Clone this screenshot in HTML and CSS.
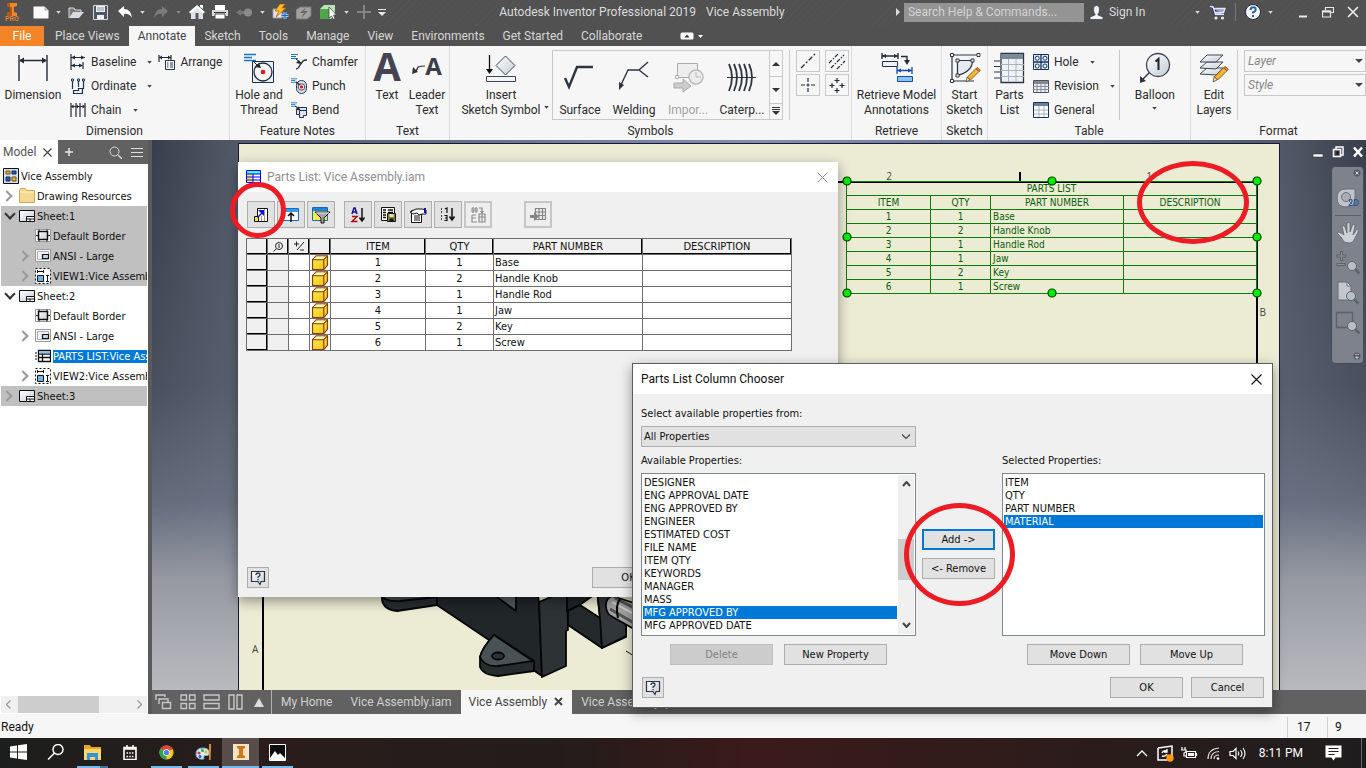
FILE: index.html
```html
<!DOCTYPE html>
<html lang="en">
<head>
    <meta charset="UTF-8">
    <meta name="viewport" content="width=device-width, initial-scale=1.0">
    <title>Autodesk Inventor Professional 2019 - Vice Assembly</title>
    <link rel="stylesheet" href="styles.css">
</head>
<body>
<svg class="defs" aria-hidden="true">
    <defs>
        <linearGradient id="steel" x1="0" y1="0" x2="1" y2="1"><stop offset="0" stop-color="#fff"/><stop offset="1" stop-color="#c3ccd6"/></linearGradient>
        <linearGradient id="gold" x1="0" y1="0" x2="1" y2="1"><stop offset="0" stop-color="#ffee58"/><stop offset="1" stop-color="#f0bf10"/></linearGradient>
    </defs>
    <symbol id="caret" viewBox="0 0 6 4"><path d="M0 0h6L3 3.5z" fill="currentColor"/></symbol>
    <symbol id="cube" viewBox="0 0 18 16"><path d="M1 5l4-4h12v10l-4 4.500H1z" fill="url(#gold)" stroke="#8d3b0c" stroke-width="1.300"/><path d="M2 4.500l3-3h11l-3 3z" fill="#fff6c0"/><path d="M1 5h12v10M13 5l4-4" fill="none" stroke="#8d3b0c" stroke-width="1.200"/></symbol>
    <symbol id="help" viewBox="0 0 16 16"><path d="M1.500 1.500h13v10H11l-1 3-2-3H1.500z" fill="url(#steel)" stroke="#2c3542" stroke-width="1.200"/><path d="M6 5q0-2 2-2t2 1.500Q10 6 8 7v1M8 9v1.200" fill="none" stroke="#2c3542" stroke-width="1.300"/></symbol>
    <symbol id="sheet" viewBox="0 0 16 16"><path d="M.5 2.500h15v11H.5z" fill="url(#steel)" stroke="#111"/><path d="M7.500 8.500h8v5h-8zM7.500 11h8M11 11v2.500" fill="#fff" stroke="#111"/></symbol>
    <symbol id="border" viewBox="0 0 16 16"><path d="M.5 1.500h15v12H.5z" fill="#fff" stroke="#999"/><path d="M3.500 3.500h9v8h-9z" fill="url(#steel)" stroke="#111" stroke-width="1.500"/><path d="M1 7.500h2M13 7.500h2M4 1.500v2M12 1.500v2M4 11.500v2M12 11.500v2" stroke="#111"/></symbol>
    <symbol id="ansi" viewBox="0 0 16 16"><path d="M.5 1.500h15v12H.5z" fill="#fff" stroke="#999"/><path d="M2.500 3.500h11v8h-11z" fill="#eef2f6" stroke="#aaa"/><path d="M7.500 6.500h6v4h-6z" fill="#c5daf0" stroke="#111" stroke-width="1.200"/></symbol>
    <symbol id="view" viewBox="0 0 16 16"><path d="M.5.5h15v15H.5z" fill="#fff" stroke="#111" stroke-dasharray="2 2"/><path d="M2.500 7.500h6v6h-6z" fill="#6db4e8" stroke="#111"/><path d="M2.500 3.500h6M2.500 2v3M8.500 2v3M12.500 7v7M11 7.500h3M11 13.500h3" stroke="#111"/></symbol>
    <symbol id="pencil" viewBox="0 0 16 16"><path d="M1 15l1-5 3 3z" fill="#f2d9a8" stroke="#51402b" stroke-width=".7"/><path d="M2.500 10L11 1.500l3 3L5.500 13z" fill="#f8b42c" stroke="#6d4a12" stroke-width=".8"/><path d="M11 1.500l1.500-1.200 3 3L14 4.500z" fill="#e27a4b" stroke="#6d4a12" stroke-width=".6"/></symbol>
    <symbol id="note" viewBox="0 0 8 6"><path d="M0 .5h7M0 2.500h5M0 4.500h7" stroke="#1474d4"/></symbol>
</svg>

<header class="titlebar">
    <div class="quick-access">
        <div class="app-logo"><svg width="12" height="13" viewBox="0 0 12 13"><path d="M1 0h10v3L8 4v5l3 1v3H1v-3l3-1V4L1 3z" fill="#f0862a"/><path d="M1 0h3v4L1 3zM4 4h2v9H1v-3l3-1z" fill="#b9590f"/></svg><span>PRO</span></div>
        <button class="q-new" aria-label="New"><svg width="16" height="13"><path d="M.5.500h11l4 4v8H.500z" fill="#fafafa"/><path d="M11.500.500v4h4z" fill="#b8b8b8"/></svg></button>
        <button class="q-caret" aria-label="New options"><svg width="5" height="3"><use href="#caret"/></svg></button>
        <button aria-label="Open"><svg width="17" height="13"><path d="M1 12V2h5l1 2h6v2" fill="#777" stroke="#ddd"/><path d="M1 12l4-6h11l-5 6z" fill="#d8dbe0"/></svg></button>
        <button aria-label="Save"><svg width="15" height="15"><path d="M.500.500h14v14H.500z" fill="#4c586a" stroke="#d5d9df"/><path d="M3 1h9v6H3zM4 10h7v4H4z" fill="#eef0f2"/><path d="M4 3h7M4 5h7" stroke="#8b95a3"/></svg></button>
        <button aria-label="Undo"><svg width="16" height="13"><path d="M1 5l6-5v3q7 0 8 9-3-5-8-4v3z" fill="#fff"/></svg></button>
        <button class="q-caret" aria-label="Undo history"><svg width="5" height="3"><use href="#caret"/></svg></button>
        <button aria-label="Redo"><svg width="14" height="13"><path d="M14 5L8 0v3Q1 3 0 12q3-5 8-4v3z" fill="#7c7c7c"/></svg></button>
        <button class="q-caret dim" aria-label="Redo history"><svg width="5" height="3"><use href="#caret"/></svg></button>
        <button aria-label="Home"><svg width="16" height="16"><path d="M2 8v7h12V8L8 2z" fill="#dfe3e8"/><path d="M0 8l8-7 8 7-1.500 1.500L8 4 1.500 9.500z" fill="#fff"/><path d="M11 1h3v4l-3-2z" fill="#fff"/><path d="M6.500 9h3v6h-3z" fill="#525b66"/></svg></button>
        <button aria-label="Print"><svg width="16" height="14"><path d="M3 0h10v5H3z" fill="#fff"/><path d="M0 5h16v6H0z" fill="#d8dbe0"/><path d="M2 7.500h12" stroke="#333"/><path d="M3 9h10v5H3z" fill="#fff" stroke="#555"/></svg></button>
        <button aria-label="Return"><svg width="16" height="9"><path d="M0 4.500L5 1v2h4v3H5v2z" fill="#777"/><circle cx="12" cy="4.500" r="4" fill="#8a8a8a"/></svg></button>
        <button class="q-caret" aria-label="Return options"><svg width="5" height="3"><use href="#caret"/></svg></button>
        <button aria-label="Update"><svg width="17" height="16"><path d="M1 5h9v9H1z" fill="#e5e5e5" stroke="#999"/><path d="M8 0l5 0-3 4h4L4 13l3-6H3z" fill="#ffc22c" stroke="#d1590e" stroke-width=".8"/><path d="M13 8v7M9.500 11.500h7" stroke="#8fc7ff" stroke-width="3"/><path d="M13 8v7M9.500 11.500h7" stroke="#1c66b8"/></svg></button>
        <button aria-label="Update all"><svg width="16" height="15"><path d="M0 5l4-3h11v9l-4 3H0z" fill="#a1a1a1" stroke="#777"/><path d="M10 2l-6 6h4l-3 5 7-7H8z" fill="#696969"/></svg></button>
        <button aria-label="Select"><svg width="16" height="16"><path d="M0 5l4-4h11v10l-4 4H0z" fill="#b8e5b2"/><path d="M0 5h10v10H0z" fill="#51a54f"/><path d="M9 3v11l2.500-2 2 3.500 1.500-1-1.500-3.500h3z" fill="#fff" stroke="#333" stroke-width=".7"/></svg></button>
        <button class="q-caret" aria-label="Select options"><svg width="5" height="3"><use href="#caret"/></svg></button>
        <button class="q-last" aria-label="Add"><svg width="14" height="14"><path d="M7 0v14M0 7h14" stroke="#858585" stroke-width="2"/></svg></button>
        <button class="q-caret" aria-label="Customize"><svg width="8" height="7"><path d="M0 .500h8" stroke="#e8e8e8"/><path d="M0 3h8L4 7z" fill="#e8e8e8"/></svg></button>
    </div>
    <h1 class="app-title"><span>Autodesk Inventor Professional 2019</span><span>Vice Assembly</span></h1>
    <div class="title-tools">
        <svg class="arrow" width="4" height="8"><path d="M0 0l4 4-4 4z" fill="#ddd"/></svg>
        <input class="search" type="text" placeholder="Search Help &amp; Commands..." aria-label="Search Help and Commands">
        <button class="sign-in"><svg width="15" height="15"><path d="M4.500 4a3 3.500 0 016 0q0 4-1.500 5v1l5 2v2.500H1V12l5-2V9Q4.500 8 4.500 4z" fill="#f0f2f5" stroke="#333b48" stroke-width=".7"/></svg>Sign In<svg class="sign-caret" width="5" height="3"><use href="#caret"/></svg></button>
        <button aria-label="Store"><svg width="16" height="15"><path d="M0 1.500h3l2.500 8H14" fill="none" stroke="#1e2960" stroke-width="3"/><path d="M0 1.500h3l2.500 8H14M4 3.500h11l-1.500 4H5" fill="#8fa0d0" stroke="#e6e9fa" stroke-width="1.300"/><circle cx="6" cy="13" r="1.600" fill="#e6e9fa"/><circle cx="12.500" cy="13" r="1.600" fill="#e6e9fa"/></svg></button>
        <span class="title-line"></span>
        <button aria-label="Help"><svg width="16" height="16"><circle cx="8" cy="8" r="7.500" fill="#f4f6fa" stroke="#243047"/><path d="M5.500 6q0-2.800 2.700-2.800T10.700 6Q10.700 7.300 8 8.500v1M8 11v2" fill="none" stroke="#1f5fb5" stroke-width="2"/></svg></button>
        <button class="q-caret" aria-label="Help options"><svg width="5" height="3"><use href="#caret"/></svg></button>
        <button class="win" aria-label="Minimize"><svg width="12" height="12"><path d="M2 10.500h8" stroke="#e8e8e8" stroke-width="2"/></svg></button>
        <button class="win" aria-label="Restore"><svg width="12" height="12"><path d="M3.500 4V1.500h8v5H9M.500 5h8v6h-8z" fill="none" stroke="#e8e8e8" stroke-width="1.200"/><path d="M.500 5.500h8" stroke="#e8e8e8" stroke-width="2"/></svg></button>
        <button class="win" aria-label="Close"><svg width="12" height="12"><path d="M1 1l10 10M11 1L1 11" stroke="#eee" stroke-width="1.600"/></svg></button>
    </div>
</header>

<nav class="tabs">
    <button class="file-tab">File</button>
    <button>Place Views</button>
    <button class="active">Annotate</button>
    <button>Sketch</button>
    <button>Tools</button>
    <button>Manage</button>
    <button>View</button>
    <button>Environments</button>
    <button>Get Started</button>
    <button>Collaborate</button>
    <button class="tab-toggle" aria-label="Minimize ribbon"><svg width="24" height="8"><rect x=".5" y=".5" width="13" height="7" rx="1.500" fill="#fff"/><path d="M4.500 5.500L7 2.500l2.500 3z" fill="#333"/><path d="M18 3h5l-2.500 3z" fill="#fff"/></svg></button>
</nav>

<section class="ribbon">
    <div class="panel dimension">
        <div class="panel-body">
            <button class="big"><svg width="32" height="32"><path d="M2 3v26M30 3v26M3 8.500h26" stroke="#222b38" stroke-width="1.400"/><path d="M2 8.500l5-3v6zM30 8.500l-5-3v6z" fill="#222b38"/></svg>Dimension</button>
            <div class="stack">
                <button><svg width="16" height="16"><path d="M1 0v16M1 3.500h14M1 11.500h11M13 8v7" stroke="#222b38" stroke-width="1.200"/><path d="M1 3.500l4-2v4zM15 3.500l-4-2v4zM1 11.500l4-2v4zM13 11.500l-4-2v4z" fill="#222b38"/></svg>Baseline<svg class="c" width="5" height="3"><use href="#caret"/></svg></button>
                <button><svg width="16" height="16"><path d="M2.500 3v8M8.500 3v6M13.500 3v8M3.500 15.500h9v-5h-4v2h-5z" fill="#e5ecf5" stroke="#1d3252" stroke-width="1.200"/><path d="M1.500 1h2v2h-2zM7.500 1h2v2h-2zM12.500 1h2v2h-2z" fill="#fff" stroke="#1d3252"/></svg>Ordinate<svg class="c" width="5" height="3"><use href="#caret"/></svg></button>
                <button><svg width="16" height="16"><path d="M1 1v14M6 1v14M10 1v14M15 1v14M1 4.500h14" stroke="#222b38" stroke-width="1.200"/><path d="M1 4.500l2.500-2v4zM6 4.500l2-2v4zM15 4.500l-2.500-2v4z" fill="#222b38"/></svg>Chain<svg class="c" width="5" height="3"><use href="#caret"/></svg></button>
            </div>
            <div class="stack">
                <button><svg width="17" height="16"><path d="M1 1v7M13 1v5M1 3.500h12" stroke="#222b38" stroke-width="1.200"/><path d="M1 3.500l3-2v4zM13 3.500l-3-2v4z" fill="#222b38"/><path d="M7.500 6.500h9v9h-9z" fill="#fff" stroke="#1d3252"/><path d="M9 9h1.500M12 9h3M9 11h1.500M12 11h3M9 13h1.500M12 13h3" stroke="#1d3252"/></svg>Arrange</button>
            </div>
        </div>
        <div class="panel-name">Dimension</div>
    </div>
    <div class="panel feature">
        <div class="panel-body">
            <button class="big"><svg width="32" height="32"><path d="M1 2.500h12M1 5.500h8M1 8.500h12" stroke="#1474d4" stroke-width="1.300"/><path d="M9.500 9.500h21v21h-21z" fill="#eaf0f7" stroke="#1d3252"/><circle cx="20" cy="20" r="9" fill="#f6f6f6" stroke="#222b38" stroke-width="1.300"/><path d="M10 9l6 6" stroke="#222"/><path d="M18 16l-6-1 4-4z" fill="#222"/><circle cx="20" cy="20" r="2.300" fill="#e11"/></svg>Hole and<br>Thread</button>
            <div class="stack">
                <button><svg width="16" height="16"><use href="#note" width="8" height="6"/><path d="M5 5l5 4" stroke="#222"/><path d="M10 10l-5-1 3-3z" fill="#222"/><path d="M5 15q2 0 4-4l3-4q1-1 4-1" fill="none" stroke="#222b38" stroke-width="1.300"/></svg>Chamfer</button>
                <button><svg width="16" height="16"><rect x="5.500" y="2.500" width="10" height="13" rx="5" fill="#dde4ec" stroke="#1d3252"/><circle cx="10.500" cy="9" r="3.300" fill="#fff" stroke="#445"/><use href="#note" width="7" height="6"/><path d="M5 4l4 3" stroke="#222" stroke-width="1.500"/><circle cx="10.500" cy="9" r="1.700" fill="#e11"/></svg>Punch</button>
                <button><svg width="16" height="16"><path d="M7.500 5.500h8v8h-3v2h-4v-3h-3v-5z" fill="#dde4ec" stroke="#1d3252"/><path d="M8.500 12.500v-4h7" fill="none" stroke="#1d3252"/><use href="#note" width="7" height="6"/><path d="M4 4l5 4" stroke="#222"/><path d="M9.500 8.500l-5-1 3-3z" fill="#222"/></svg>Bend</button>
            </div>
        </div>
        <div class="panel-name">Feature Notes</div>
    </div>
    <div class="panel text">
        <div class="panel-body">
            <button class="big"><span class="letter">A</span>Text</button>
            <button class="big"><span class="leader"><svg width="13" height="12"><path d="M2 10q3-1 4-5 3-1 7-1" fill="none" stroke="#333" stroke-width="1.200"/><path d="M0 12l1-7 5 5z" fill="#333"/></svg><span class="letter small">A</span></span>Leader<br>Text</button>
        </div>
        <div class="panel-name">Text</div>
    </div>
    <div class="panel symbols">
        <div class="panel-body">
            <button class="big insert"><svg width="32" height="32"><path d="M4.500 3v17" stroke="#111" stroke-width="1.300"/><path d="M1 17h7l-3.500 5z" fill="#111"/><path d="M20.500 4l9.500 9.500-9.500 9.500-9.500-9.500z" fill="url(#steel)" stroke="#3c4654"/><path d="M1.500 24.500h29v5h-29z" fill="#f1f4f8" stroke="#3c4654"/></svg><span>Insert<br>Sketch Symbol</span><svg class="c" width="5" height="3"><use href="#caret"/></svg></button>
            <div class="gallery">
                <button><svg width="32" height="32"><path d="M1 17l4 9L13 6h16" fill="none" stroke="#2d3542" stroke-width="2.400"/></svg>Surface</button>
                <button><svg width="32" height="32"><path d="M2 26L10 9h12M30 1l-9 8 9 7" fill="none" stroke="#2d3542" stroke-width="1.400"/><path d="M1 29v-8l5 3z" fill="#2d3542"/></svg>Welding</button>
                <button class="off"><svg width="32" height="32"><path d="M5.500 2.500h20v14h-20z" fill="#eee" stroke="#aaa"/><path d="M3.500 14.500h3v3h-3z" fill="#fff" stroke="#aaa"/><circle cx="24" cy="16" r="7" fill="#ececec" stroke="#bbb" stroke-width="1.500"/><path d="M24 11v5h5" fill="none" stroke="#bbb"/><path d="M2 22h9v-4l8 7-8 6v-4H2z" fill="#ccc" stroke="#aaa"/></svg>Impor...</button>
                <button><svg width="32" height="32"><path d="M1 16.500h29" stroke="#2d3542"/><path d="M3 3q6 13 0 27M8 3q6 13 0 27M13 3q6 13 0 27M18 3q6 13 0 27M23 3q6 13 0 27" fill="none" stroke="#2d3542" stroke-width="1.800"/></svg>Caterp...</button>
                <div class="gallery-scroll">
                    <button aria-label="Previous row"><svg width="8" height="4"><path d="M0 4l4-4 4 4z"/></svg></button>
                    <button aria-label="Next row"><svg width="8" height="4"><path d="M0 0h8L4 4z"/></svg></button>
                    <button class="all" aria-label="Show all"><svg width="8" height="8"><path d="M0 0h8v1H0zM0 2h8v1H0zM0 4h8L4 8z"/></svg></button>
                </div>
            </div>
            <div class="marks">
                <button aria-label="Centerline"><svg width="18" height="18"><path d="M2 16L16 2" stroke="#222b38" stroke-width="1.300" stroke-dasharray="5 2 2 2"/></svg></button>
                <button aria-label="Centerline bisector"><svg width="18" height="18"><path d="M1 11L11 1M3 16L16 3M9 17l8-8" stroke="#222b38" stroke-width="1.200" stroke-dasharray="4 1.500 1.500 1.500"/></svg></button>
                <button aria-label="Center mark"><svg width="18" height="18"><path d="M9 2v4M9 7.500v3M9 12v4M2 9h4M7.500 9h3M12 9h4" stroke="#222b38" stroke-width="1.200"/></svg></button>
                <button aria-label="Centered pattern"><svg width="18" height="18"><path d="M9 2v5M6.500 4.500h5M4 7v5M1.500 9.500h5M14 7v5M11.500 9.500h5M9 12v5M6.500 14.500h5" stroke="#222b38" stroke-width="1.200"/></svg></button>
            </div>
        </div>
        <div class="panel-name">Symbols</div>
    </div>
    <div class="panel retrieve">
        <div class="panel-body">
            <button class="big"><svg width="32" height="32"><path d="M1.500 9.500h15v5h-15z" fill="#eef2f8" stroke="#1d3252"/><path d="M1 1v6M17 1v6M1 4h16M20 4.500h6v6" fill="none" stroke="#222b38" stroke-width="1.400"/><path d="M1 4l4-2v4zM17 4l-4-2v4zM23 8h6l-3 5z" fill="#222b38"/><path d="M16 15v7M31 15v7M16 18.500h15" stroke="#164cae" stroke-width="1.300"/><path d="M16 18.500l4-2v4zM31 18.500l-4-2v4z" fill="#164cae"/><path d="M16.500 24.500h15v5h-15z" fill="#8fc1ee" stroke="#164cae"/></svg>Retrieve Model<br>Annotations</button>
        </div>
        <div class="panel-name">Retrieve</div>
    </div>
    <div class="panel sketch">
        <div class="panel-body">
            <button class="big"><svg width="32" height="32"><path d="M3 3h26M3 3v26h22" fill="none" stroke="#2c3542" stroke-width="1.200"/><path d="M8.500 8.500h15q0 11-15 15z" fill="#e5ebf2" stroke="#2c3542" stroke-width="1.200"/><path d="M1.500 1.500h3v3h-3zM28 1.500h3v3h-3zM1.500 27.500h3v3h-3zM7 7h3v3H7zM22 7h3v3h-3zM7 22h3v3H7z" fill="#fff" stroke="#2c3542"/><use href="#pencil" x="16" y="15" width="16" height="16"/></svg>Start<br>Sketch</button>
        </div>
        <div class="panel-name">Sketch</div>
    </div>
    <div class="panel tables">
        <div class="panel-body">
            <button class="big parts"><svg width="32" height="32"><path d="M8 1.500h22.500v29H8z" fill="#eef1f5" stroke="#2c3542" stroke-width="1.300"/><path d="M8.500 2h21.500v5H8.500z" fill="#7b8a99"/><path d="M8 12.500h23M8 18.500h23M8 24.500h23M15.500 7v23M23 7v23" stroke="#aab3bf"/><path d="M1 9h6M1 14.500h6M1 20h6M1 26h6" stroke="#2c3542"/></svg>Parts<br>List</button>
            <div class="stack">
                <button><svg width="16" height="16"><path d="M.5.5h15v15H.5z" fill="#dce8f7" stroke="#14345f"/><path d="M8 0v16M0 8h16" stroke="#14345f" stroke-width="1.300"/><circle cx="4.200" cy="4.200" r="2" fill="#fff" stroke="#14345f"/><circle cx="12" cy="4.200" r="2" fill="#fff" stroke="#14345f"/><circle cx="4.200" cy="12" r="2" fill="#fff" stroke="#14345f"/><circle cx="12" cy="12" r="2" fill="#fff" stroke="#14345f"/></svg>Hole<svg class="c" width="5" height="3"><use href="#caret"/></svg></button>
                <button><svg width="16" height="16"><path d="M.5 2.500h15v12H.5z" fill="#eef0f3" stroke="#4a5361"/><path d="M1 3h14v3H1z" fill="#8b8494"/><path d="M0 8.500h16M0 11.500h16M4 6v8M8 6v8M12 6v8" stroke="#828b98"/></svg>Revision<svg class="c" width="5" height="3"><use href="#caret"/></svg></button>
                <button><svg width="16" height="16"><path d="M.5.5h15v15H.5z" fill="#fff" stroke="#14345f"/><path d="M1 1h14v3H1z" fill="#68809a"/><path d="M1 8h14M1 12h14M6 4v11M11 4v11" stroke="#9eb2c9"/></svg>General</button>
            </div>
            <span class="divider"></span>
            <button class="big balloon"><svg width="32" height="32"><path d="M12 19l-9 9" stroke="#2c3542" stroke-width="1.500"/><path d="M1 31v-7l6 5z" fill="#2c3542"/><circle cx="19" cy="13" r="11.500" fill="url(#steel)" stroke="#3c4654" stroke-width="1.300"/><path d="M16.500 9.500L19.500 7v11" fill="none" stroke="#222" stroke-width="2"/></svg>Balloon<svg class="c" width="5" height="3"><use href="#caret"/></svg></button>
        </div>
        <div class="panel-name">Table</div>
    </div>
    <div class="panel format">
        <div class="panel-body">
            <button class="big layers"><svg width="32" height="32"><g fill="url(#steel)" stroke="#3c4654"><path d="M2 22l7-6h16l-7 7z"/><path d="M2 16l7-6h16l-7 7z"/><path d="M2 10l7-7h16l-7 7z"/></g><use href="#pencil" x="14" y="14" width="17" height="17"/></svg>Edit<br>Layers</button>
            <span class="divider"></span>
            <div class="format-selects">
                <div class="format-select"><select aria-label="Layer"><option>Layer</option></select><svg width="8" height="4"><path d="M0 0h8L4 4z" fill="#444"/></svg></div>
                <div class="format-select"><select aria-label="Style"><option>Style</option></select><svg width="8" height="4"><path d="M0 0h8L4 4z" fill="#444"/></svg></div>
            </div>
        </div>
        <div class="panel-name">Format</div>
    </div>
</section>

<main class="workspace">
    <aside class="browser">
        <div class="browser-head">
            <div class="browser-tab">Model <svg width="9" height="9"><path d="M.500.500l8 8M8.500.500l-8 8" stroke="#444" stroke-width="1.200"/></svg></div>
            <button aria-label="Add panel"><svg width="8" height="8"><path d="M4 0v8M0 4h8" stroke="#e8e8e8" stroke-width="1.500"/></svg></button>
            <button class="find" aria-label="Find"><svg width="13" height="13"><circle cx="5.500" cy="5.500" r="4.500" fill="none" stroke="#ddd"/><path d="M9 9l4 4" stroke="#ddd" stroke-width="1.300"/></svg></button>
            <button aria-label="Menu"><svg width="12" height="9"><path d="M0 .500h12M0 4.500h12M0 8.500h12" stroke="#ddd"/></svg></button>
        </div>
        <ul class="tree">
            <li class="root"><svg class="ic" viewBox="0 0 16 16"><path d="M.5.5h15v15H.5z" fill="#cfe0f2" stroke="#111"/><path d="M3 3h4v3H3zM9 9h4v4H9z" fill="#e8b13c" stroke="#7a4a00"/><path d="M9 3h4v3H9zM3 9h4v4H3z" fill="#2e5fa8" stroke="#0c2a5a"/></svg><span>Vice Assembly</span></li>
            <li class="l1"><i class="exp"></i><svg class="ic" viewBox="0 0 16 16"><path d="M.5 2.500l1-2h5l1 2h8v12H.5z" fill="#f5d892" stroke="#d0a654"/><path d="M1 4h14" stroke="#fff0c0"/></svg><span>Drawing Resources</span></li>
            <li class="l1 grey"><i class="exp open"></i><svg class="ic"><use href="#sheet"/></svg><span>Sheet:1</span></li>
            <li class="l2 grey"><i></i><svg class="ic"><use href="#border"/></svg><span>Default Border</span></li>
            <li class="l2 grey"><i class="exp"></i><svg class="ic"><use href="#ansi"/></svg><span>ANSI - Large</span></li>
            <li class="l2 grey"><i class="exp"></i><svg class="ic"><use href="#view"/></svg><span>VIEW1:Vice Assembly.iam</span></li>
            <li class="l1"><i class="exp open"></i><svg class="ic"><use href="#sheet"/></svg><span>Sheet:2</span></li>
            <li class="l2"><i></i><svg class="ic"><use href="#border"/></svg><span>Default Border</span></li>
            <li class="l2"><i class="exp"></i><svg class="ic"><use href="#ansi"/></svg><span>ANSI - Large</span></li>
            <li class="l2"><i></i><svg class="ic" viewBox="0 0 16 16"><path d="M3.500 2.500h12v11h-12zM3.500 6h12M3.500 9.500h12M7.500 2.500v11" fill="#fff" stroke="#111" stroke-width="1.300"/><path d="M4 3h11v2.500H4z" fill="#8ac0ea"/><path d="M0 5h2M0 8h2M0 11h2" stroke="#111"/></svg><span class="chosen">PARTS LIST:Vice Assembly.iam</span></li>
            <li class="l2"><i class="exp"></i><svg class="ic"><use href="#view"/></svg><span>VIEW2:Vice Assembly.iam</span></li>
            <li class="l1 grey"><i class="exp"></i><svg class="ic"><use href="#sheet"/></svg><span>Sheet:3</span></li>
        </ul>
        <div class="hscroll"><svg width="5" height="9"><path d="M4.500.500l-4 4 4 4" fill="none" stroke="#999" stroke-width="1.300"/></svg><span></span><svg width="5" height="9"><path d="M.500.500l4 4-4 4" fill="none" stroke="#999" stroke-width="1.300"/></svg></div>
    </aside>

    <div class="stage">
        <div class="canvas">
            <div class="sheet">
                <span class="frame-line"></span>
                <span class="frame-left"></span>
                <span class="zone zone-two">2</span><span class="zone zone-one">1</span><span class="zone zone-b">B</span><span class="zone zone-a">A</span>
                <span class="zone-tick"></span>
                <svg class="vice" width="254" height="90" viewBox="380 590 254 90">
                    <g stroke="#050607" stroke-width="1.800" stroke-linejoin="round">
                        <path d="M382 590v10q2 10 15 11l40-6v-15z" fill="#272c2f"/>
                        <path d="M382 596q4 6 18 5l36-4" fill="#454c50"/>
                        <path d="M437 590v15l55 37 50 34-3-74-2-12z" fill="#212628"/>
                        <path d="M497 590v7l19 14v-21z" fill="#515a5d"/>
                        <path d="M539 602l28-12 1 40-2 1v35l-24 11z" fill="#2d3235"/>
                        <path d="M567 590v21l14-7 20-14z" fill="#1f2426"/>
                        <path d="M568 611l12-6 20 13-3-28h18l11 37v10l-24 11-34-23z" fill="#24292c"/>
                        <path d="M597 590l3 28 2 30 24-12v-10l-11-36z" fill="#303639"/>
                        <path d="M494 635q-12 13-14 22v10q3 8 18 9l36-5v-10z" fill="#272c2f"/>
                        <path d="M494 635q-12 13-14 22 4 10 18 9l35-5z" fill="#495154"/>
                        <ellipse cx="498" cy="656" rx="6" ry="3.500" fill="#2d3235"/>
                        <path d="M612 596q-7 3-6 11 1 7 5 9l23 13v-26z" fill="#a3a3a3"/>
                    </g>
                    <path d="M612 602l22 12" stroke="#d0d0d0" stroke-width="2"/>
                    <path d="M610 609l24 14M615 598l19 10" stroke="#555" stroke-width="3"/>
                    <path d="M620 599q-5 7-2 19" fill="none" stroke="#050607" stroke-width="2"/>
                    <path d="M626 651l8 5" stroke="#111"/>
                </svg>
                <table class="drawn-list">
                    <caption>PARTS LIST</caption>
                    <colgroup><col class="d1"><col class="d2"><col class="d3"><col class="d4"></colgroup>
                    <tr><th>ITEM</th><th>QTY</th><th>PART NUMBER</th><th>DESCRIPTION</th></tr>
                    <tr><td>1</td><td>1</td><td>Base</td><td></td></tr>
                    <tr><td>2</td><td>2</td><td>Handle Knob</td><td></td></tr>
                    <tr><td>3</td><td>1</td><td>Handle Rod</td><td></td></tr>
                    <tr><td>4</td><td>1</td><td>Jaw</td><td></td></tr>
                    <tr><td>5</td><td>2</td><td>Key</td><td></td></tr>
                    <tr><td>6</td><td>1</td><td>Screw</td><td></td></tr>
                </table>
                <svg class="grips" width="422" height="124"><g fill="#00f000" stroke="#033d03" stroke-width="1.200"><circle cx="6" cy="6" r="4"/><circle cx="211" cy="6" r="4"/><circle cx="416" cy="6" r="4"/><circle cx="6" cy="62" r="4"/><circle cx="416" cy="62" r="4"/><circle cx="6" cy="118" r="4"/><circle cx="211" cy="118" r="4"/><circle cx="416" cy="118" r="4"/></g></svg>
            </div>
            <div class="mdi-controls">
                <button aria-label="Minimize drawing"><svg width="12" height="12"><path d="M1 8h10v3H1z" fill="#fff" stroke="#333" stroke-width=".6"/></svg></button>
                <button aria-label="Restore drawing"><svg width="12" height="12"><path d="M4 3V1h7v8H9M1.500 3.500h7v7h-7z" fill="none" stroke="#fff" stroke-width="1.500"/><path d="M4 5.500h3v3H4z" fill="#222"/></svg></button>
                <button aria-label="Close drawing"><svg width="12" height="12"><path d="M2 1.500l8 9M10 1.500l-8 9" stroke="#fff" stroke-width="2.500"/></svg></button>
            </div>
            <div class="navbar">
                <svg width="30" height="198" viewBox="0 0 30 198">
                    <circle cx="25" cy="6" r="3.500" fill="#565b64"/><path d="M23.500 4.500l3 3M26.500 4.500l-3 3" stroke="#ddd"/>
                    <path d="M5 31q0-9 9-9h9v9q0 9-9 9t-9-9z" fill="#bfc4ca" stroke="#6a717b"/><circle cx="14" cy="30" r="4.500" fill="#a9aeb6" stroke="#6a717b"/><path d="M17 34l3 3" stroke="#6a717b"/>
                    <path d="M3 48.500h26" stroke="#5c626d"/>
                    <path d="M12 75q-2-5-7-9 2-2 7 2l-2-9q2-1 3 1l2 6V56q2-1 3 0v9l3-8q2 0 2 2l-2 9 4-6q2 0 1 3l-4 8q-1 3-5 3z" fill="#ced2d6" stroke="#5f6570" stroke-width=".8"/>
                    <path d="M9.500 84v10M4.500 89h10M4.500 97.500h9" stroke="#5c626d" stroke-width="3"/><path d="M9.500 85v8M5.500 89h8M5.500 97.500h7" stroke="#8d939c"/>
                    <path d="M6 115h9l4 4v14H6z" fill="#c3c7cd" stroke="#666d77"/><path d="M15 115v4h4z" fill="#f0f0f0" stroke="#666d77"/>
                    <path d="M4.500 145.500h16v15h-16z" fill="none" stroke="#5c626d" stroke-width="1.300"/>
                    <g fill="#b8c0c6" stroke="#5e646e"><circle cx="20" cy="99" r="4.500"/><circle cx="19" cy="129" r="4.500"/><circle cx="20" cy="159" r="4.500"/></g>
                    <path d="M23.500 102.500l4 4M22.500 132.500l4 4M23.500 162.500l4 4" stroke="#5e646e" stroke-width="2.500"/>
                    <circle cx="25" cy="189" r="3.500" fill="#565b64"/><path d="M23 187.500h4M23.500 190h3L25 191.500z" fill="#ddd" stroke="#ddd" stroke-width=".6"/>
                </svg>
                <span class="two-d">2D</span>
            </div>
        </div>
        <div class="doc-tabs">
            <div class="doc-icons">
                <button aria-label="Cascade"><svg width="17" height="16"><path d="M1 6V1h9v2M4 10V5h9v3M7.500 8.500h8v6h-8z" fill="none" stroke="#c8c8c8" stroke-width="1.400"/></svg></button>
                <button aria-label="Arrange"><svg width="16" height="16"><path d="M1 1h5.500v5H1zM9.500 1H15v5H9.500zM1 9.500h5.500v5H1zM9.500 9.500H15v5H9.500z" fill="none" stroke="#c8c8c8" stroke-width="1.300"/></svg></button>
                <button aria-label="Tile horizontally"><svg width="17" height="16"><path d="M1 1h15v5H1zM1 9.500h15v5H1z" fill="none" stroke="#c8c8c8" stroke-width="1.400"/></svg></button>
                <button aria-label="Tile vertically"><svg width="15" height="16"><path d="M1 1h5v14H1zM9 1h5v14H9z" fill="none" stroke="#c8c8c8" stroke-width="1.400"/></svg></button>
                <button aria-label="More windows"><svg width="10" height="9"><path d="M0 9l5-9 5 9z" fill="#ddd"/></svg></button>
            </div>
            <button>My Home</button>
            <button>Vice Assembly.iam</button>
            <button class="active">Vice Assembly <svg width="9" height="9"><path d="M1 1l7 7M8 1L1 8" stroke="#444" stroke-width="2"/></svg></button>
            <button>Vice Assembly.ipn</button>
        </div>
    </div>

    <section class="dialog parts-dialog">
        <header><svg width="15" height="14"><path d="M.500.500h14v12H.500z" fill="#fff04a" stroke="#00f"/><path d="M7 4h7v8H7z" fill="#fff"/><path d="M1 1h13v3H1z" fill="#4ff"/><path d="M0 4h15M0 7h15M0 10h15M7 4v9" stroke="#00f" stroke-width="1"/></svg><h2>Parts List: Vice Assembly.iam</h2><button class="close" aria-label="Close"><svg width="11" height="11"><path d="M.500.500l10 10M10.500.500l-10 10" stroke="#888"/></svg></button></header>
        <div class="parts-body">
            <div class="dialog-tools">
                <button aria-label="Column Chooser"><svg width="16" height="16"><path d="M4.500 1.500h10v13h-10z" fill="#fff" stroke="#111"/><path d="M8.500 9v5M11.500 2v12" stroke="#999"/><path d="M1.500 9.500h4v5h-4z" fill="#ffe23c" stroke="#111"/><path d="M5 3h6v6L9 7l-4 4-1-1 4-4z" fill="#1111e8"/></svg></button>
                <button aria-label="Group Settings"><svg width="16" height="16"><path d="M.500 1.500h15v12H.500z" fill="#fff" stroke="#1769bd"/><path d="M1 2h14v3H1z" fill="#3a9be8"/><path d="M8 15V6M5 9l3-3 3 3" fill="none" stroke="#111" stroke-width="1.500"/></svg></button>
                <button aria-label="Filter Settings"><svg width="20" height="18"><path d="M1.500 1.500h15v13h-15z" fill="#ffe94a" stroke="#1769bd"/><path d="M2 2h14v3H2z" fill="#1684e6"/><path d="M4 6h15l-6 6v5h-3v-5z" fill="#a3a7ab" stroke="#111"/><path d="M5 7h13" stroke="#eee"/></svg></button>
                <button class="apart" aria-label="Sort"><svg width="16" height="16"><path d="M2 7l2-6h1l2 6M3 5h3" fill="none" stroke="#13139a" stroke-width="1.500"/><path d="M2 9.500h5l-5 5h5.500" fill="none" stroke="#a31515" stroke-width="1.500"/><path d="M12 1v12M9.500 10.500L12 14l2.500-3.500" fill="none" stroke="#111" stroke-width="1.500"/></svg></button>
                <button aria-label="Export"><svg width="17" height="17"><path d="M1.500 1.500h13v13h-13z" fill="#fff" stroke="#111"/><path d="M3 4h3M8 4h5M3 6.500h3M8 6.500h5M3 9h3M3 11.500h3" stroke="#111" stroke-width="1.300"/><path d="M7.500 7.500h8v8h-8z" fill="#8a8a1c" stroke="#111"/><path d="M9.500 8h4v3h-4z" fill="#ddd"/><path d="M9.500 12.500h4v3h-4z" fill="#111"/></svg></button>
                <button aria-label="Table Layout"><svg width="18" height="16"><path d="M2.500 3.500h10v12h-10z" fill="#fff" stroke="#111"/><path d="M5 9h6M5 11h6M5 13h6" stroke="#111"/><path d="M1 5l6-3h6l4 1v4h-4l-3 1-2-2-4 1z" fill="#fff" stroke="#111"/><path d="M15 1h2v5h-2z" fill="#13139a"/></svg></button>
                <button aria-label="Renumber Items"><svg width="16" height="16"><path d="M1 2h1M1 5h1M1 9h1M1 12h1" stroke="#111" stroke-width="1.500"/><path d="M5 2l2-1v5M4.500 8.500H7v2.500H5h2v2.500H4.500" fill="none" stroke="#111" stroke-width="1.200"/><path d="M12 1v11M9.500 9.500L12 13l2.500-3.500" fill="none" stroke="#111" stroke-width="1.500"/></svg></button>
                <button class="off" aria-label="Save Item Overrides"><svg width="17" height="17"><path d="M3 1v6M6 1v6M1 3h7M1 5h7M9 2h3v5M10.500 5l1.500 2 1.500-2M2 9v7h5M2 9h4M2 12h4M9 8h6v8H9zM9 11h6M12 8v8" fill="none" stroke="#8d8d8d" stroke-width="1.200"/></svg></button>
                <button class="off wide" aria-label="Member Selection"><svg width="16" height="16"><path d="M5.500 1.500h10v11h-10zM5 5h10M5 8.500h10M9 1v11M12.500 1v11" fill="none" stroke="#858585" stroke-width="1.200"/><path d="M0 8h4V5l5 4.500L4 14v-3H0z" fill="#858585"/></svg></button>
            </div>
            <table class="parts-table">
                <colgroup><col class="p-small"><col class="p-small"><col class="p-small"><col class="p-small"><col class="p-item"><col class="p-qty"><col class="p-wide"><col class="p-wide"></colgroup>
                <thead><tr><th></th><th><svg width="11" height="11"><circle cx="6" cy="5" r="3.500" fill="none" stroke="#222"/><path d="M3 8l-2.500 2.500M6 3v4" stroke="#222"/></svg></th><th><svg width="11" height="11"><path d="M0 3h5M2.500.500v5M10 1L3 9M6 9h4" stroke="#222"/></svg></th><th></th><th>ITEM</th><th>QTY</th><th>PART NUMBER</th><th>DESCRIPTION</th></tr></thead>
                <tbody>
                    <tr><td></td><td></td><td></td><td><svg><use href="#cube"/></svg></td><td>1</td><td>1</td><td>Base</td><td></td></tr>
                    <tr><td></td><td></td><td></td><td><svg><use href="#cube"/></svg></td><td>2</td><td>2</td><td>Handle Knob</td><td></td></tr>
                    <tr><td></td><td></td><td></td><td><svg><use href="#cube"/></svg></td><td>3</td><td>1</td><td>Handle Rod</td><td></td></tr>
                    <tr><td></td><td></td><td></td><td><svg><use href="#cube"/></svg></td><td>4</td><td>1</td><td>Jaw</td><td></td></tr>
                    <tr><td></td><td></td><td></td><td><svg><use href="#cube"/></svg></td><td>5</td><td>2</td><td>Key</td><td></td></tr>
                    <tr><td></td><td></td><td></td><td><svg><use href="#cube"/></svg></td><td>6</td><td>1</td><td>Screw</td><td></td></tr>
                </tbody>
            </table>
            <div class="parts-foot">
                <button class="help-btn" aria-label="Help"><svg width="16" height="16"><use href="#help"/></svg></button>
                <button class="btn short">OK</button>
            </div>
        </div>
    </section>

    <section class="dialog chooser">
        <header><h2>Parts List Column Chooser</h2><button class="close" aria-label="Close"><svg width="11" height="11"><path d="M.500.500l10 10M10.500.500l-10 10" stroke="#111" stroke-width="1.100"/></svg></button></header>
        <div class="chooser-body">
            <div class="col-left">
                <label for="source">Select available properties from:</label>
                <div class="combo">
                    <select id="source"><option>All Properties</option></select>
                    <svg width="10" height="6"><path d="M1 .500l4 4 4-4" fill="none" stroke="#444" stroke-width="1.200"/></svg>
                </div>
                <label for="available">Available Properties:</label>
                <div class="list">
                    <select id="available" size="12">
                        <option>DESIGNER</option>
                        <option>ENG APPROVAL DATE</option>
                        <option>ENG APPROVED BY</option>
                        <option>ENGINEER</option>
                        <option>ESTIMATED COST</option>
                        <option>FILE NAME</option>
                        <option>ITEM QTY</option>
                        <option>KEYWORDS</option>
                        <option>MANAGER</option>
                        <option>MASS</option>
                        <option selected>MFG APPROVED BY</option>
                        <option>MFG APPROVED DATE</option>
                    </select>
                    <div class="vscroll"><svg width="9" height="6"><path d="M1 5l3.500-4L8 5" fill="none" stroke="#444" stroke-width="2"/></svg><span></span><svg width="9" height="6"><path d="M1 1l3.500 4L8 1" fill="none" stroke="#444" stroke-width="2"/></svg></div>
                </div>
                <div class="pair">
                    <button class="btn" disabled>Delete</button>
                    <button class="btn">New Property</button>
                </div>
            </div>
            <div class="col-mid">
                <button class="btn short focus">Add -&gt;</button>
                <button class="btn short">&lt;- Remove</button>
            </div>
            <div class="col-right">
                <label for="selected">Selected Properties:</label>
                <div class="list">
                    <select id="selected" size="12">
                        <option>ITEM</option>
                        <option>QTY</option>
                        <option>PART NUMBER</option>
                        <option selected>MATERIAL</option>
                    </select>
                </div>
                <div class="pair">
                    <button class="btn">Move Down</button>
                    <button class="btn">Move Up</button>
                </div>
            </div>
        </div>
        <div class="chooser-foot">
            <button class="help-btn" aria-label="Help"><svg width="16" height="16"><use href="#help"/></svg></button>
            <button class="btn short">OK</button>
            <button class="btn short">Cancel</button>
        </div>
    </section>

    <!-- hand-drawn highlights -->
    <span class="ring ring-tool"></span>
    <span class="ring ring-column"></span>
    <span class="ring ring-add"></span>
</main>

<footer class="status"><span class="ready">Ready</span><span class="num">17</span><span class="num last">9</span></footer>

<div class="taskbar">
    <button aria-label="Start"><svg width="17" height="16"><path d="M0 2.500l7-1v6H0zM8 1.300L17 0v7.500H8zM0 8.500h7v6l-7-1zM8 8.500h9V16l-9-1.300z" fill="#fff"/></svg></button>
    <button aria-label="Search"><svg width="17" height="16"><circle cx="11" cy="5.500" r="5" fill="none" stroke="#fff" stroke-width="1.400"/><path d="M7.500 9L1 15.500" stroke="#fff" stroke-width="1.500"/></svg></button>
    <button class="open twin" aria-label="File Explorer"><svg width="17" height="15"><path d="M0 0h6l1 2h10v13H0z" fill="#e8a823"/><path d="M0 4h17v11H0z" fill="#ffd766"/><path d="M3 15V8h11v7h-3v-3H6v3z" fill="#3592dd"/></svg></button>
    <button aria-label="Calendar"><svg width="14" height="15"><path d="M1 2.500h12v12H1zM1 4h12" fill="none" stroke="#fff" stroke-width="1.600"/><path d="M4 0v4M10 0v4" stroke="#fff" stroke-width="1.500"/><path d="M3.500 8h7M3.500 11.500h7" stroke="#fff" stroke-width="1.500" stroke-dasharray="1.500 1.200"/></svg></button>
    <button class="open" aria-label="Chrome"><svg width="15" height="15" viewBox="-8 -8 16 16"><circle r="7.500" fill="#f6c915"/><path d="M0 0L-6.500-3.750A7.500 7.500 0 016.500-3.750z" fill="#dc4637"/><path d="M0 0L-6.500-3.750A7.500 7.500 0 000 7.500z" fill="#31a350"/><circle r="3.600" fill="#fff"/><circle r="2.800" fill="#427fed"/></svg></button>
    <button class="open" aria-label="Paint"><svg width="17" height="17"><path d="M1 10q0-6 7-6t6 6q0 2-3 1.500T9 15q-8 1-8-5z" fill="#d5edf8" stroke="#75aed0"/><circle cx="4" cy="9" r="1.600" fill="#e33"/><circle cx="7.500" cy="6.500" r="1.500" fill="#3a4"/><circle cx="11" cy="8" r="1.500" fill="#f2b200"/><circle cx="5" cy="12.500" r="1.500" fill="#25c"/><path d="M14 0l2 0v5l-.500 11h-1.500z" fill="#d98b35"/></svg></button>
    <button class="open current" aria-label="Inventor"><svg width="16" height="16"><path d="M0 0h16v16H0z" fill="#fbe3c8"/><path d="M4 2h8v2l-2 1v6l2 1v2H4v-2l2-1V5L4 4z" fill="#d2751d"/></svg></button>
    <button class="open" aria-label="Photos"><svg width="17" height="17"><path d="M.500.500h16v16H.500z" fill="#0c0c0c" stroke="#fff"/><path d="M1 14l5-7 3 4 2-2 5 5v2H1z" fill="#fff"/></svg></button>
    <div class="tray">
        <button aria-label="Show hidden icons"><svg width="12" height="8"><path d="M1 7l5-5 5 5" fill="none" stroke="#fff" stroke-width="1.300"/></svg></button>
        <button aria-label="Updates"><svg width="17" height="17"><path d="M1 3l14-2v10M1 3v12h9" fill="none" stroke="#fff" stroke-width="1.500"/><path d="M5 8q1-3 5-2M10 4v3H7M10 9q-1 3-5 2" fill="none" stroke="#fff" stroke-width="1.300"/><circle cx="13" cy="13" r="3.700" fill="#ff9b0e"/></svg></button>
        <button aria-label="Battery"><svg width="17" height="12"><path d="M5.500 4.500h9v6h-9zM15.500 6v3" fill="none" stroke="#fff" stroke-width="1.200"/><path d="M7 6h6v3H7z" fill="#fff"/><path d="M1 0v3M4 0v3M0 3h5v2L3 6v3h2" fill="none" stroke="#fff" stroke-width="1.200"/></svg></button>
        <button aria-label="Network"><svg width="13" height="13"><g fill="none" stroke="#ddd" stroke-width="1.200"><path d="M1 12Q1 2 12 1M4 12Q4 5 12 4.500M7 12q0-4 5-4"/></g><circle cx="11" cy="11.500" r="1.300" fill="#fff"/></svg></button>
        <button aria-label="Volume"><svg width="17" height="13"><path d="M1 4.500h3l3-3v10l-3-3H1z" fill="none" stroke="#fff" stroke-width="1.200"/><path d="M9 4.500q1.500 2 0 4M11.500 3q3 3.500 0 7M14 1q4 5.500 0 11" fill="none" stroke="#fff" stroke-width="1.100"/></svg></button>
        <time>8:11 PM</time>
        <button aria-label="Notifications"><svg width="17" height="16"><path d="M.500.500h16v12h-6l-2 3-2-3h-6z" fill="#fff"/><path d="M3.500 3.500h10M3.500 6.500h10M3.500 9.500h6" stroke="#222"/></svg></button>
    </div>
</div>
</body>
</html>
```

FILE: styles.css
```css
* {
    box-sizing: border-box;
}

body {
    margin: 0;
    height: 100vh;
    display: flex;
    flex-direction: column;
    overflow: hidden;
    font-family: Roboto, "Open Sans", sans-serif;
    font-size: 12px;
    line-height: 15px;
    color: #2b2b2b;
    background-color: #f6f6f6;
}

button, input, select {
    font: inherit;
    color: inherit;
}

button {
    border: none;
    background: none;
    padding: 0;
    white-space: nowrap;
}

svg {
    flex: none;
}

h1, h2 {
    margin: 0;
    font-size: inherit;
    font-weight: normal;
}

.defs {
    position: absolute;
    width: 0;
    height: 0;
}

/* title bar */

.titlebar {
    display: flex;
    align-items: center;
    justify-content: space-between;
    height: 26px;
    padding-bottom: 2px;
    background: repeating-linear-gradient(135deg, #515151 0, #515151 4px, #555 5px);
    color: #dcdcdc;
}

.titlebar button {
    width: 24px;
    height: 20px;
    display: flex;
    align-items: center;
    justify-content: center;
}

.quick-access, .title-tools {
    display: flex;
    align-items: center;
}

.quick-access {
    width: 388px;
}

.quick-access .q-new {
    margin-left: 5px;
}

.titlebar .q-caret {
    width: 12px;
}

.titlebar .dim {
    color: #888;
}

.app-logo {
    width: 24px;
    display: flex;
    flex-direction: column;
    align-items: center;
    font-size: 7px;
    line-height: 6px;
    font-weight: bold;
    color: #e08031;
}

.app-title {
    display: flex;
    gap: 10px;
}

.title-tools {
    width: 470px;
}

.arrow {
    margin-right: 4px;
}

.search {
    width: 180px;
    height: 19px;
    border: none;
    padding: 0 4px;
    background-color: #949494;
}

.search::placeholder {
    color: #d3d3d3;
}

.title-tools .sign-in {
    width: 122px;
    padding-left: 5px;
    gap: 5px;
    justify-content: flex-start;
}

.sign-caret {
    margin-left: auto;
    margin-right: 6px;
}

.title-line {
    width: 1px;
    height: 18px;
    margin: 0 5px;
    background-color: #777;
}

.title-tools .win {
    width: 25px;
}

.title-tools .q-caret + .win {
    margin-left: 14px;
}

/* ribbon tabs */

.tabs {
    display: flex;
    height: 20px;
    background-color: #515151;
    color: #d6d6d6;
}

.tabs button {
    padding: 0 9px;
}

.tabs .file-tab {
    width: 44px;
    margin-right: 2px;
    background-color: #f48428;
    color: #fff;
}

.tabs .active {
    background-color: #f6f6f6;
    color: #444;
}

.tabs .tab-toggle {
    margin-left: 20px;
}

/* ribbon */

.ribbon {
    display: flex;
    height: 94px;
    background-color: #f6f6f6;
}

.panel {
    display: flex;
    flex-direction: column;
    justify-content: space-between;
    flex: none;
    padding: 4px 0 1px;
    border-right: 1px solid #dcdcdc;
}

.panel-body {
    display: flex;
    align-items: flex-start;
}

.panel-name {
    text-align: center;
}

.dimension { width: 230px; }
.feature { width: 136px; }
.text { width: 84px; }
.symbols { width: 402px; }
.retrieve { width: 90px; }
.sketch { width: 46px; }
.tables { width: 203px; }
.format { flex: 1; border-right: none; }

.big {
    display: flex;
    flex-direction: column;
    align-items: center;
    gap: 4px;
    padding-top: 2px;
}

.retrieve .panel-body, .sketch .panel-body {
    justify-content: center;
}

.stack {
    display: flex;
    flex-direction: column;
    padding-left: 6px;
}

.stack button {
    display: flex;
    align-items: center;
    gap: 5px;
    height: 24px;
}

.c {
    margin-left: 6px;
    color: #444;
}

.dimension .big {
    width: 62px;
    margin-left: 2px;
}

.dimension .stack:last-child {
    padding-left: 6px;
}

.feature .big {
    width: 58px;
}

.feature .stack {
    padding-left: 3px;
}

.text .panel-body {
    padding-left: 1px;
}

.text .big {
    width: 40px;
}

.letter {
    height: 32px;
    font: bold 40px/28px "Open Sans", sans-serif;
    color: #454452;
}

.letter.small {
    font-size: 24px;
    line-height: 28px;
    color: #3a3f4a;
}

.leader {
    display: flex;
    align-items: center;
    height: 32px;
}

.insert {
    position: relative;
    width: 102px;
}

.insert .c {
    position: absolute;
    right: 3px;
    bottom: 9px;
}

.gallery {
    display: flex;
    height: 70px;
    border: 1px solid #c9c9c9;
}

.gallery > button {
    display: flex;
    flex-direction: column;
    align-items: center;
    justify-content: space-between;
    width: 54px;
    padding: 10px 0 1px;
}

.gallery > .off {
    color: #a3a3a3;
}

.gallery-scroll {
    display: flex;
    flex-direction: column;
    width: 13px;
    border-left: 1px solid #c9c9c9;
}

.gallery-scroll button {
    flex: 5;
    border-bottom: 1px solid #c9c9c9;
}

.gallery-scroll .all {
    flex: 3;
    border-bottom: none;
}

.gallery-scroll svg {
    display: block;
    margin: auto;
    fill: #333;
}

.marks {
    display: grid;
    grid-template-columns: 24px 24px;
    align-content: start;
    gap: 2px 5px;
    margin-left: 6px;
    padding-left: 6px;
    height: 70px;
    border-left: 1px solid #c9c9c9;
}

.marks button {
    width: 24px;
    height: 22px;
    border: 1px solid #c9c9c9;
}

.marks svg {
    display: block;
    margin: auto;
}

.parts {
    width: 44px;
}

.tables .stack {
    padding-left: 2px;
}

.tables .stack button {
    width: 86px;
}

.divider {
    width: 1px;
    height: 70px;
    background-color: #c9c9c9;
}

.balloon {
    width: 72px;
}

.balloon .c {
    margin: 0;
}

.layers {
    width: 46px;
}

.format-selects {
    flex: 1;
    display: flex;
    flex-direction: column;
    gap: 2px;
    margin-left: 6px;
}

.format-select {
    display: flex;
    align-items: center;
    height: 22px;
    padding-right: 2px;
    border: 1px solid #c9c9c9;
}

.format-select select {
    flex: 1;
    appearance: none;
    border: none;
    padding: 0 3px;
    background: none;
    color: #888;
    font-style: italic;
}

/* model browser */

.workspace {
    position: relative;
    flex: 1;
    min-height: 0;
    display: flex;
}

.browser {
    display: flex;
    flex-direction: column;
    width: 152px;
    border-right: 4px solid #5a5a5a;
    background-color: #fff;
}

.browser-head {
    display: flex;
    height: 24px;
    background-color: #616161;
}

.browser-head button {
    display: flex;
    align-items: center;
    justify-content: center;
    width: 22px;
}

.browser-head .find {
    margin-left: auto;
}

.browser-tab {
    display: flex;
    align-items: center;
    gap: 7px;
    width: 58px;
    padding-left: 3px;
    background-color: #fff;
    color: #555;
}

.tree, .dialog, .drawn-list {
    font-family: "DejaVu Sans Condensed", "Open Sans", sans-serif;
    font-size: 11px;
    line-height: 13px;
    color: #111;
}

.tree {
    list-style: none;
    margin: 0;
    padding: 2px 1px;
    flex: 1;
}

.tree li {
    display: flex;
    align-items: center;
    height: 20px;
    gap: 2px;
    overflow: hidden;
    white-space: nowrap;
}

.tree .root {
    padding-left: 2px;
}

.tree .l1 {
    padding-left: 2px;
}

.tree .l2 {
    padding-left: 18px;
}

.tree .grey {
    background-color: #c0c0c0;
}

.tree i {
    flex: none;
    width: 14px;
    height: 8px;
}

.exp::before {
    content: "";
    display: block;
    width: 6px;
    height: 6px;
    border: solid #9a9a9a;
    border-width: 2px 2px 0 0;
    transform: rotate(45deg);
}

.exp.open::before {
    margin: -2px 0 0 3px;
    border-color: #333;
    transform: rotate(135deg);
}

.ic {
    width: 16px;
    height: 16px;
}

.chosen {
    background-color: #0078d7;
    color: #fff;
}

.hscroll {
    display: flex;
    align-items: center;
    height: 17px;
    margin: 0 1px 1px;
    padding: 0 5px;
    background-color: #f0f0f0;
}

.hscroll span {
    width: 81px;
    height: 17px;
    margin: 0 auto 0 7px;
    background-color: #cdcdcd;
}

/* drawing area */

.stage {
    flex: 1;
    min-width: 0;
    display: flex;
    flex-direction: column;
}

.canvas {
    position: relative;
    flex: 1;
    overflow: hidden;
    background:
        linear-gradient(180deg, rgba(98, 106, 124, 0) 0, rgba(98, 106, 124, 0.4) 45%, rgba(112, 119, 136, 0.8) 66%, #9699a3 80%, #b9babe 100%),
        linear-gradient(90deg, #383e4a, #525a69 86px, #8290ab 50%, #525a69 calc(100% - 86px), #383e4a);
}

.sheet {
    position: absolute;
    top: 3px;
    bottom: 0;
    left: 86px;
    right: 86px;
    border: solid #14173f;
    border-width: 1px 1px 0;
    background-color: #ececd5;
}

.frame-line {
    position: absolute;
    top: 37px;
    right: 21px;
    bottom: 0;
    left: 500px;
    border: solid #000;
    border-width: 2px 2px 0 0;
}

.frame-left {
    position: absolute;
    top: 300px;
    bottom: 0;
    left: 23px;
    width: 2px;
    background-color: #000;
}

.zone {
    position: absolute;
    font: 10px/12px "Open Sans", sans-serif;
    color: #444;
}

.zone-two { top: 26px; right: 387px; }
.zone-one { top: 26px; right: 127px; }
.zone-b { top: 162px; right: 13px; }
.zone-a { top: 499px; left: 13px; }

.zone-tick {
    position: absolute;
    top: 28px;
    right: 258px;
    width: 2px;
    height: 9px;
    background-color: #000;
}

.vice {
    position: absolute;
    top: 446px;
    left: 141px;
}

.drawn-list {
    position: absolute;
    top: 37px;
    right: 22px;
    width: 411px;
    border-collapse: collapse;
    table-layout: fixed;
    font-size: 10px;
    line-height: 13px;
    color: #0b5d0b;
}

.drawn-list caption {
    height: 14px;
    border: solid #0a7d0a;
    border-width: 1px 1px 0;
}

.drawn-list th, .drawn-list td {
    height: 14px;
    padding: 0;
    border: 1px solid #0a7d0a;
    text-align: center;
    font-weight: normal;
}

.drawn-list td:nth-child(3) {
    padding-left: 2px;
    text-align: left;
}

.d1 { width: 84px; }
.d2 { width: 60px; }
.d3 { width: 133px; }

.grips {
    position: absolute;
    top: 31px;
    right: 16px;
}

.mdi-controls {
    position: absolute;
    top: 6px;
    right: 2px;
    display: flex;
    gap: 8px;
}

.mdi-controls button {
    height: 12px;
}

.mdi-controls svg {
    display: block;
}

.navbar {
    position: absolute;
    top: 26px;
    right: 2px;
    width: 33px;
    height: 198px;
    border: 1px solid #444a56;
    border-radius: 4px;
    background-color: #7d828d;
}

.navbar svg {
    display: block;
}

.two-d {
    position: absolute;
    top: 29px;
    right: 4px;
    font-size: 9px;
    font-weight: bold;
    color: #31598f;
}

.doc-tabs {
    display: flex;
    height: 24px;
    background-color: #616161;
    color: #d0d0d0;
}

.doc-tabs > button {
    padding: 0 9px;
}

.doc-tabs > .active {
    padding: 0 9px 0 8px;
    background-color: #f6f6f6;
    color: #444;
}

.doc-tabs .active svg {
    margin-left: 4px;
}

.doc-icons {
    display: flex;
    width: 120px;
    border-right: 1px solid #b0b0b0;
}

.doc-icons button {
    width: 24px;
}

.doc-icons svg {
    display: block;
    margin: auto;
}

/* dialogs */

.dialog {
    position: absolute;
    display: flex;
    flex-direction: column;
    background-color: #f0f0f0;
    box-shadow: 0 4px 12px rgba(0, 0, 0, 0.4);
}

.dialog header {
    display: flex;
    align-items: center;
    gap: 6px;
    height: 31px;
    padding: 0 10px 0 8px;
    background-color: #fff;
    font: 12px/16px Roboto, "Open Sans", sans-serif;
}

.close {
    margin-left: auto;
}

.close svg {
    display: block;
}

.parts-dialog {
    top: 22px;
    left: 238px;
    width: 600px;
    height: 435px;
}

.parts-dialog header {
    height: 30px;
    color: #8d8d8d;
}

.parts-body {
    flex: 1;
    display: flex;
    flex-direction: column;
    padding: 9px 8px;
}

.dialog-tools {
    display: flex;
    gap: 2px;
    padding-left: 1px;
    margin-bottom: 10px;
}

.dialog-tools button {
    display: flex;
    align-items: center;
    justify-content: center;
    width: 28px;
    height: 27px;
    border: 1px solid #adadad;
    background-color: #e1e1e1;
}

.dialog-tools .off {
    border: 2px solid #c6c6c6;
    background-color: #eee;
}

.dialog-tools .apart {
    margin-left: 7px;
}

.dialog-tools .wide {
    margin-left: 30px;
}

.parts-table {
    width: 546px;
    border-collapse: collapse;
    table-layout: fixed;
}

.parts-table th, .parts-table td {
    height: 16px;
    padding: 0;
    border: 1px solid #6d6d6d;
    background-color: #fff;
    font-weight: normal;
    text-align: center;
}

.parts-table th, .parts-table td:first-child {
    background-color: #f0f0f0;
    box-shadow: inset -1px -1px #000;
}

.parts-table td:nth-child(2) {
    background-color: #f0f0f0;
}

.parts-table td:nth-child(7) {
    padding-left: 1px;
    text-align: left;
}

.parts-table svg {
    display: block;
    width: 18px;
    height: 15px;
    margin: auto;
}

.parts-table th svg {
    width: 11px;
    height: 11px;
}

.p-small { width: 21px; }
.p-item { width: 95px; }
.p-qty { width: 68px; }
.p-wide { width: 149px; }

.parts-foot {
    display: flex;
    justify-content: space-between;
    margin-top: auto;
    padding: 0 165px 0 1px;
}

.help-btn {
    width: 22px;
    height: 21px;
    padding: 1px 2px;
    border: 1px solid #adadad;
    background-color: #e1e1e1;
}

.help-btn svg {
    display: block;
}

.btn {
    width: 103px;
    height: 21px;
    border: 1px solid #adadad;
    background-color: #e1e1e1;
}

.btn.short {
    width: 73px;
}

.btn.focus {
    border: 2px solid #0078d7;
}

.btn:disabled {
    border-color: #bfbfbf;
    background-color: #ccc;
    color: #838383;
}

.chooser {
    top: 223px;
    left: 632px;
    width: 641px;
    height: 345px;
    border: 1px solid #5c5c5c;
}

.chooser header {
    height: 30px;
}

.chooser-body {
    display: flex;
    align-items: flex-end;
    padding: 13px 7px 0 8px;
}

.chooser label {
    display: block;
}

.col-left {
    width: 275px;
}

.col-mid {
    display: flex;
    flex-direction: column;
    gap: 8px;
    margin: 0 7px 86px 6px;
}

.col-right {
    flex: 1;
}

.combo {
    display: flex;
    align-items: center;
    height: 21px;
    margin: 6px 0 7px;
    padding-right: 4px;
    border: 1px solid #adadad;
    background-color: #e1e1e1;
}

.combo select {
    flex: 1;
    appearance: none;
    border: none;
    padding: 0 2px;
    background: none;
}

.list {
    display: flex;
    height: 163px;
    margin: 6px 0 8px;
    padding: 1px;
    border: 1px solid #82878f;
    background-color: #fff;
}

.list select {
    flex: 1;
    min-width: 0;
    height: 159px;
    padding: 1px 0;
    border: none;
    outline: none;
    overflow: hidden;
    scrollbar-width: none;
    background-color: #fff;
}

.list option {
    height: 13px;
    min-height: 13px;
    padding: 0 1px;
    line-height: 13px;
}

.list option:checked {
    background: #0078d7 linear-gradient(#0078d7, #0078d7);
    color: #fff;
    -webkit-text-fill-color: #fff;
}

.vscroll {
    display: flex;
    flex-direction: column;
    align-items: center;
    width: 16px;
    padding: 6px 0;
    margin-left: 1px;
    background-color: #f0f0f0;
}

.vscroll span {
    width: 16px;
    height: 41px;
    margin: 52px 0 auto;
    background-color: #cdcdcd;
}

.pair {
    display: flex;
    justify-content: center;
    gap: 11px;
}

.col-right .pair {
    gap: 10px;
    padding-left: 3px;
}

.chooser-foot {
    display: flex;
    gap: 8px;
    padding: 12px 8px 0 9px;
}

.chooser-foot .help-btn {
    margin-right: auto;
}

/* red rings */

.ring {
    position: absolute;
    border: 5px solid #ed1c24;
    border-radius: 50%;
    pointer-events: none;
}

.ring-tool {
    top: 42px;
    left: 230px;
    width: 56px;
    height: 56px;
}

.ring-column {
    top: 21px;
    left: 1137px;
    width: 112px;
    height: 83px;
}

.ring-add {
    top: 363px;
    left: 904px;
    width: 111px;
    height: 103px;
}

/* status bar and taskbar */

.status {
    display: flex;
    align-items: center;
    height: 24px;
    padding: 3px 0 0;
    background-color: #f6f6f6;
    color: #111;
}

.ready {
    flex: 1;
    padding-left: 1px;
}

.num {
    width: 40px;
    height: 21px;
    padding: 3px 0 0 9px;
    border-left: 1px solid #d0d0d0;
}

.num.last {
    width: 39px;
    padding-left: 7px;
}

.taskbar {
    display: flex;
    height: 30px;
    background: linear-gradient(90deg, #1c1e1d 0, #2a1d1b 20%, #221c1b 40%, #3b1a1a 55%, #2e1c1b 75%, #1e1d1d 100%);
    color: #fff;
}

.taskbar button {
    display: flex;
    align-items: center;
    justify-content: center;
}

.taskbar > button {
    width: 37px;
    border-bottom: 2px solid transparent;
}

.taskbar .open {
    border-image: linear-gradient(90deg, transparent 5px, #76b9ed 5px, #76b9ed 32px, transparent 32px) 2;
    border-width: 0 0 2px;
}

.taskbar .twin {
    border-image: linear-gradient(90deg, transparent 5px, #76b9ed 5px, #76b9ed 25px, #4c6f8b 25px, #4c6f8b 32px, transparent 32px) 2;
    border-width: 0 0 2px;
}

.taskbar .current {
    border-image: none;
    border-bottom: 2px solid #76b9ed;
    background-color: #594d4b;
}

.tray {
    display: flex;
    align-items: center;
    margin-left: auto;
    margin-right: 4px;
    padding-right: 16px;
    border-right: 1px solid #666;
}

.tray button {
    width: 24px;
}

.tray time {
    margin: 0 18px 0 9px;
}
```
